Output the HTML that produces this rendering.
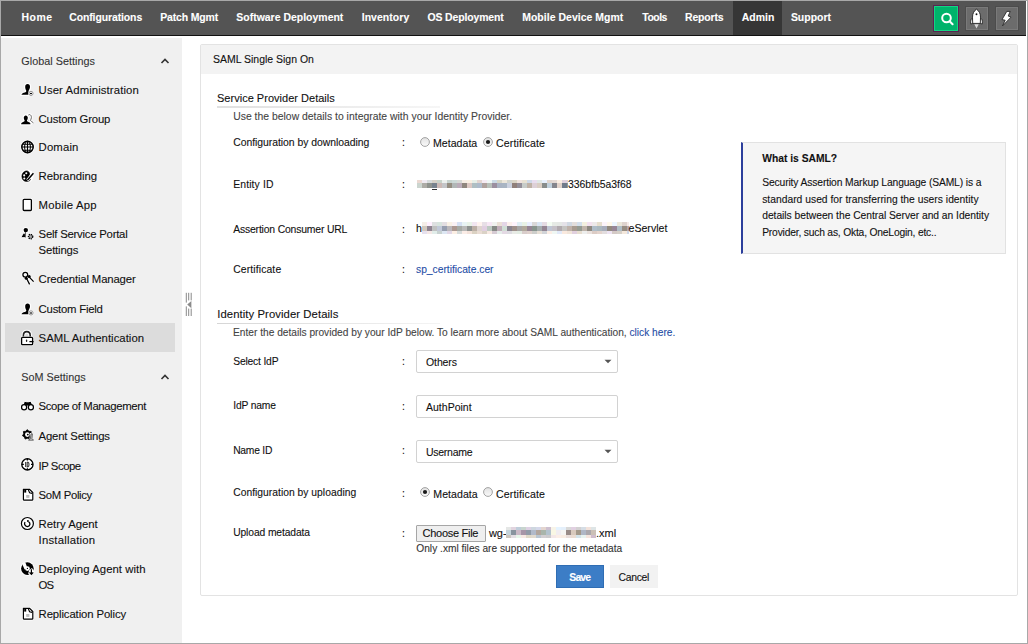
<!DOCTYPE html>
<html><head><meta charset="utf-8"><title>SAML</title>
<style>
html,body{margin:0;padding:0;width:1028px;height:644px;overflow:hidden;background:#fff;}
body{position:relative;font-family:"Liberation Sans",sans-serif;}
.t{position:absolute;-webkit-text-stroke:0.1px;}
.r{position:absolute;}
</style></head><body>
<div class="r" style="left:0px;top:0px;width:1028px;height:644px;background:#fff;"></div>
<div class="r" style="left:1px;top:1px;width:1025px;height:34px;background:#545454;"></div>
<div class="r" style="left:1px;top:35px;width:1025px;height:1px;background:#111;"></div>
<div class="r" style="left:733px;top:1px;width:49px;height:34px;background:#363636;"></div>
<div class="t" style="left:21.5px;top:10.08px;font-size:10.45px;line-height:15px;color:#fff;font-weight:bold;white-space:nowrap;letter-spacing:0.5px;">Home</div>
<div class="t" style="left:69.2px;top:10.08px;font-size:10.45px;line-height:15px;color:#fff;font-weight:bold;white-space:nowrap;letter-spacing:-0.092px;">Configurations</div>
<div class="t" style="left:160.2px;top:10.08px;font-size:10.45px;line-height:15px;color:#fff;font-weight:bold;white-space:nowrap;letter-spacing:-0.133px;">Patch Mgmt</div>
<div class="t" style="left:236.3px;top:10.08px;font-size:10.45px;line-height:15px;color:#fff;font-weight:bold;white-space:nowrap;letter-spacing:0.017px;">Software Deployment</div>
<div class="t" style="left:361.7px;top:10.08px;font-size:10.45px;line-height:15px;color:#fff;font-weight:bold;white-space:nowrap;letter-spacing:0.075px;">Inventory</div>
<div class="t" style="left:427.4px;top:10.08px;font-size:10.45px;line-height:15px;color:#fff;font-weight:bold;white-space:nowrap;letter-spacing:-0.108px;">OS Deployment</div>
<div class="t" style="left:522.2px;top:10.08px;font-size:10.45px;line-height:15px;color:#fff;font-weight:bold;white-space:nowrap;letter-spacing:0.047px;">Mobile Device Mgmt</div>
<div class="t" style="left:642.3px;top:10.08px;font-size:10.45px;line-height:15px;color:#fff;font-weight:bold;white-space:nowrap;letter-spacing:-0.5px;">Tools</div>
<div class="t" style="left:685px;top:10.08px;font-size:10.45px;line-height:15px;color:#fff;font-weight:bold;white-space:nowrap;letter-spacing:-0.15px;">Reports</div>
<div class="t" style="left:741.8px;top:10.08px;font-size:10.45px;line-height:15px;color:#fff;font-weight:bold;white-space:nowrap;letter-spacing:0.025px;">Admin</div>
<div class="t" style="left:790.9px;top:10.08px;font-size:10.45px;line-height:15px;color:#fff;font-weight:bold;white-space:nowrap;letter-spacing:0.017px;">Support</div>
<div class="r" style="left:933px;top:5px;width:26px;height:27px;background:#00b36b;border:1px solid #5b2352;box-shadow:inset 0 0 0 1px #14d383;box-sizing:border-box;"></div>
<svg class="r" style="left:933px;top:5px" width="26" height="27" viewBox="0 0 26 27"><circle cx="13.5" cy="13" r="4.3" fill="none" stroke="#fff" stroke-width="2"/><line x1="16.6" y1="16.2" x2="19.6" y2="19.2" stroke="#fff" stroke-width="2" stroke-linecap="round"/></svg>
<div class="r" style="left:965px;top:6px;width:24px;height:25px;background:#6c6c6c;border:1px solid #4c4c4c;box-shadow:inset 0 0 0 1px #7a7a7a;box-sizing:border-box;"></div>
<svg class="r" style="left:965px;top:6px" width="24" height="25" viewBox="965 6 24 25"><path d="M972.6 17.6 C971 18.6 970.5 20.8 970.7 23.9 L973.4 23.4Z M980.4 17.6 C982 18.6 982.5 20.8 982.3 23.9 L979.6 23.4Z" fill="#fff" stroke="#111" stroke-width="0.8"/><path d="M976.5 9.2 C979 10.8 980.5 13.6 980.5 17.2 L980.3 23.4 L972.7 23.4 L972.5 17.2 C972.5 13.6 974 10.8 976.5 9.2Z" fill="#fff" stroke="#111" stroke-width="0.8"/><path d="M974.3 24.2 H978.7 L976.5 28.4Z" fill="#d8d8d8"/><circle cx="976.5" cy="14.2" r="0.95" fill="#111"/></svg>
<div class="r" style="left:995px;top:6px;width:24px;height:25px;background:#6c6c6c;border:1px solid #4c4c4c;box-shadow:inset 0 0 0 1px #7a7a7a;box-sizing:border-box;"></div>
<svg class="r" style="left:995px;top:6px" width="24" height="25" viewBox="995 6 24 25"><path d="M1006.8 11.4 L1010.2 11.4 L1008.2 16 L1011 17.2 L1002.6 25.8 L1005.2 20.2 L1002 19.6Z" fill="#fff" stroke="#1a1a1a" stroke-width="0.8" stroke-linejoin="round"/></svg>
<div class="r" style="left:1px;top:38px;width:181px;height:605px;background:#f0f0f0;"></div>
<div class="r" style="left:5px;top:323px;width:170px;height:29px;background:#dcdcdc;"></div>
<div class="t" style="left:21.3px;top:54.05px;font-size:10.82px;line-height:15px;color:#333;font-weight:normal;white-space:nowrap;letter-spacing:0.029px;">Global Settings</div>
<div class="t" style="left:21.3px;top:369.55px;font-size:10.82px;line-height:15px;color:#333;font-weight:normal;white-space:nowrap;letter-spacing:0.009px;">SoM Settings</div>
<svg class="r" style="left:159.5px;top:57px" width="10" height="8" viewBox="0 0 10 8"><path d="M1.5 6 L5 2.5 L8.5 6" fill="none" stroke="#333" stroke-width="1.6"/></svg>
<svg class="r" style="left:159.5px;top:373px" width="10" height="8" viewBox="0 0 10 8"><path d="M1.5 6 L5 2.5 L8.5 6" fill="none" stroke="#333" stroke-width="1.6"/></svg>
<div class="t" style="left:38.6px;top:81.77px;font-size:11.35px;line-height:16px;color:#111;font-weight:normal;white-space:nowrap;letter-spacing:0.1px;">User Administration</div>
<div class="t" style="left:38.6px;top:110.87px;font-size:11.35px;line-height:16px;color:#111;font-weight:normal;white-space:nowrap;letter-spacing:-0.182px;">Custom Group</div>
<div class="t" style="left:38.6px;top:139.37px;font-size:11.35px;line-height:16px;color:#111;font-weight:normal;white-space:nowrap;letter-spacing:0.14px;">Domain</div>
<div class="t" style="left:38.6px;top:167.97px;font-size:11.35px;line-height:16px;color:#111;font-weight:normal;white-space:nowrap;letter-spacing:-0.022px;">Rebranding</div>
<div class="t" style="left:38.6px;top:197.07px;font-size:11.35px;line-height:16px;color:#111;font-weight:normal;white-space:nowrap;letter-spacing:0.2px;">Mobile App</div>
<div class="t" style="left:38.6px;top:225.87px;font-size:11.35px;line-height:16px;color:#111;font-weight:normal;white-space:nowrap;letter-spacing:-0.233px;">Self Service Portal</div>
<div class="t" style="left:38.6px;top:241.87px;font-size:11.35px;line-height:16px;color:#111;font-weight:normal;white-space:nowrap;letter-spacing:-0.171px;">Settings</div>
<div class="t" style="left:38.6px;top:271.07px;font-size:11.35px;line-height:16px;color:#111;font-weight:normal;white-space:nowrap;letter-spacing:-0.147px;">Credential Manager</div>
<div class="t" style="left:38.6px;top:301.07px;font-size:11.35px;line-height:16px;color:#111;font-weight:normal;white-space:nowrap;letter-spacing:-0.227px;">Custom Field</div>
<div class="t" style="left:38.6px;top:330.07px;font-size:11.35px;line-height:16px;color:#111;font-weight:normal;white-space:nowrap;letter-spacing:0.033px;">SAML Authentication</div>
<div class="t" style="left:38.6px;top:398.47px;font-size:11.35px;line-height:16px;color:#111;font-weight:normal;white-space:nowrap;letter-spacing:-0.356px;">Scope of Management</div>
<div class="t" style="left:38.6px;top:428.17px;font-size:11.35px;line-height:16px;color:#111;font-weight:normal;white-space:nowrap;letter-spacing:-0.185px;">Agent Settings</div>
<div class="t" style="left:38.6px;top:457.57px;font-size:11.35px;line-height:16px;color:#111;font-weight:normal;white-space:nowrap;letter-spacing:-0.471px;">IP Scope</div>
<div class="t" style="left:38.6px;top:486.97px;font-size:11.35px;line-height:16px;color:#111;font-weight:normal;white-space:nowrap;letter-spacing:-0.344px;">SoM Policy</div>
<div class="t" style="left:38.6px;top:516.17px;font-size:11.35px;line-height:16px;color:#111;font-weight:normal;white-space:nowrap;letter-spacing:-0.01px;">Retry Agent</div>
<div class="t" style="left:38.6px;top:532.17px;font-size:11.35px;line-height:16px;color:#111;font-weight:normal;white-space:nowrap;letter-spacing:0.2px;">Installation</div>
<div class="t" style="left:38.6px;top:560.87px;font-size:11.35px;line-height:16px;color:#111;font-weight:normal;white-space:nowrap;letter-spacing:0.058px;">Deploying Agent with</div>
<div class="t" style="left:38.6px;top:576.87px;font-size:11.35px;line-height:16px;color:#111;font-weight:normal;white-space:nowrap;letter-spacing:-0.85px;">OS</div>
<div class="t" style="left:38.6px;top:606.17px;font-size:11.35px;line-height:16px;color:#111;font-weight:normal;white-space:nowrap;letter-spacing:-0.118px;">Replication Policy</div>
<svg class="r" style="left:19px;top:82px;overflow:visible" width="18" height="18" viewBox="19 82 18 18"><g transform="translate(0 0)"><path d="M27.6 84.1 C29.1 84.1 30 85.2 30 86.8 C30 88.4 29.3 89.6 28.7 90.4 C28.4 91.4 28.4 92.6 28.7 94.8 L21.4 94.8 C21.9 93.6 23.2 93 24.8 92.6 C25.9 92.3 26.5 91.6 26.2 90.5 C25.6 89.6 25.2 88.4 25.2 86.8 C25.2 85.2 26.1 84.1 27.6 84.1Z" fill="#fff" stroke="#fff" stroke-width="2.4" stroke-linejoin="round" /><path d="M27.6 84.1 C29.1 84.1 30 85.2 30 86.8 C30 88.4 29.3 89.6 28.7 90.4 C28.4 91.4 28.4 92.6 28.7 94.8 L21.4 94.8 C21.9 93.6 23.2 93 24.8 92.6 C25.9 92.3 26.5 91.6 26.2 90.5 C25.6 89.6 25.2 88.4 25.2 86.8 C25.2 85.2 26.1 84.1 27.6 84.1Z" fill="#000"/><circle cx="31" cy="93.4" r="2.7" fill="#fff"/><circle cx="31" cy="93.4" r="2.1" fill="#fff" stroke="#8a8a8a" stroke-width="0.9"/><ellipse cx="31" cy="93.5" rx="1.1" ry="0.65" fill="#000"/></g></svg>
<svg class="r" style="left:19px;top:112px;overflow:visible" width="18" height="18" viewBox="19 112 18 18"><path d="M28.3 120.5 C27.6 119.6 27.4 118.6 27.4 117.6 C27.4 116 28.2 114.6 29.4 114.6 C30.8 114.6 31.4 116 31.4 117.4 C31.4 118.8 30.7 119.8 30.4 120.4 C31 121.4 32.4 121.8 33.4 122.8" fill="none" stroke="#fff" stroke-width="2.6"/><path d="M28.3 120.5 C27.6 119.6 27.4 118.6 27.4 117.6 C27.4 116 28.2 114.6 29.4 114.6 C30.8 114.6 31.4 116 31.4 117.4 C31.4 118.8 30.7 119.8 30.4 120.4 C31 121.4 32.4 121.8 33.4 122.8" fill="none" stroke="#555" stroke-width="0.9"/><path d="M25.8 115.4 C27 115.4 27.8 116.4 27.8 117.8 C27.8 119 27.3 119.9 26.9 120.6 C26.9 121.4 27.6 121.8 29 122.2 C30 122.6 30.4 123.3 30.5 124.2 L21.1 124.2 C21.2 123.3 21.7 122.6 22.7 122.2 C24 121.8 24.7 121.4 24.7 120.6 C24.3 119.9 23.8 119 23.8 117.8 C23.8 116.4 24.6 115.4 25.8 115.4Z" fill="#fff" stroke="#fff" stroke-width="2.4" stroke-linejoin="round" /><path d="M25.8 115.4 C27 115.4 27.8 116.4 27.8 117.8 C27.8 119 27.3 119.9 26.9 120.6 C26.9 121.4 27.6 121.8 29 122.2 C30 122.6 30.4 123.3 30.5 124.2 L21.1 124.2 C21.2 123.3 21.7 122.6 22.7 122.2 C24 121.8 24.7 121.4 24.7 120.6 C24.3 119.9 23.8 119 23.8 117.8 C23.8 116.4 24.6 115.4 25.8 115.4Z" fill="#000"/></svg>
<svg class="r" style="left:19px;top:138px;overflow:visible" width="18" height="18" viewBox="19 138 18 18"><circle cx="27.5" cy="147" r="7.2" fill="#fff"/><circle cx="27.5" cy="147" r="5.7" fill="#fff" stroke="#000" stroke-width="1.5"/><path d="M27.5 141.3 V152.7 M21.8 147 H33.2 M22.6 144.2 H32.4 M22.6 150.2 H32.4" stroke="#000" stroke-width="1.1"/><ellipse cx="27.5" cy="147" rx="2.9" ry="5.7" fill="none" stroke="#000" stroke-width="1"/></svg>
<svg class="r" style="left:19px;top:167px;overflow:visible" width="18" height="18" viewBox="19 167 18 18"><circle cx="27" cy="176" r="6.6" fill="#fff"/><path d="M26.6 170.9 C24 170.9 21.9 173.3 21.9 176.4 C21.9 179.6 24 181.4 26.6 181.4 C28.6 181.4 30.4 180.6 30.4 179.4 C30.4 178.4 28.8 178.2 28.6 177.2 C28.4 176 29.6 175.4 29.6 174 C29.6 172.2 28.2 170.9 26.6 170.9Z" fill="#000" stroke="#000" stroke-width="0.6"/><circle cx="26.3" cy="173.2" r="1.05" fill="#fff"/><circle cx="24.2" cy="175.4" r="1.05" fill="#fff"/><circle cx="24.3" cy="178.5" r="1.05" fill="#fff"/><circle cx="28" cy="180" r="0.9" fill="#fff"/><path d="M27.4 180.2 L33.4 173.2" stroke="#fff" stroke-width="3"/><path d="M27.4 180.2 L33.4 173.2" stroke="#000" stroke-width="1.5"/></svg>
<svg class="r" style="left:19px;top:196px;overflow:visible" width="18" height="18" viewBox="19 196 18 18"><rect x="23.2" y="199.3" width="8.2" height="11.2" rx="0.9" fill="#fff" stroke="#fff" stroke-width="2.6"/><rect x="23.2" y="199.3" width="8.2" height="11.2" rx="0.9" fill="#fff" stroke="#000" stroke-width="1.3"/></svg>
<svg class="r" style="left:19px;top:226px;overflow:visible" width="18" height="18" viewBox="19 226 18 18"><circle cx="25.8" cy="230.1" r="3" fill="#fff"/><circle cx="25.8" cy="230.1" r="2.2" fill="#000"/><path d="M20.9 237.6 L23.4 233.2 L25.3 233.4 L25.6 237.6Z" fill="#000" stroke="#fff" stroke-width="0.8"/><path d="M25.4 232 V237.4" stroke="#444" stroke-width="0.9"/><circle cx="30.6" cy="236.6" r="3.3" fill="#fff"/><circle cx="30.6" cy="236.6" r="2.2" fill="#888" stroke="#000" stroke-width="1.3" stroke-dasharray="1.2 0.7"/><circle cx="30.6" cy="236.6" r="0.9" fill="#aaa"/></svg>
<svg class="r" style="left:19px;top:270px;overflow:visible" width="18" height="18" viewBox="19 270 18 18"><g fill="none" stroke="#fff" stroke-width="3"><circle cx="25.3" cy="274.8" r="2.4"/><path d="M26.2 277.8 L29.6 284.4 M28.6 276.4 L33.6 281.6"/></g><g fill="none" stroke="#000" stroke-width="1.3"><circle cx="25.3" cy="274.8" r="2.4"/><path d="M26.2 277.8 L29.6 284.4 M28.6 276.4 L33.6 281.6"/></g><circle cx="26.2" cy="278.2" r="1.5" fill="#000"/><circle cx="29.2" cy="276.4" r="1.5" fill="#000"/></svg>
<svg class="r" style="left:19px;top:300px;overflow:visible" width="18" height="18" viewBox="19 300 18 18"><g transform="translate(0 219.5)"><path d="M27.6 84.1 C29.1 84.1 30 85.2 30 86.8 C30 88.4 29.3 89.6 28.7 90.4 C28.4 91.4 28.4 92.6 28.7 94.8 L21.4 94.8 C21.9 93.6 23.2 93 24.8 92.6 C25.9 92.3 26.5 91.6 26.2 90.5 C25.6 89.6 25.2 88.4 25.2 86.8 C25.2 85.2 26.1 84.1 27.6 84.1Z" fill="#fff" stroke="#fff" stroke-width="2.4" stroke-linejoin="round" /><path d="M27.6 84.1 C29.1 84.1 30 85.2 30 86.8 C30 88.4 29.3 89.6 28.7 90.4 C28.4 91.4 28.4 92.6 28.7 94.8 L21.4 94.8 C21.9 93.6 23.2 93 24.8 92.6 C25.9 92.3 26.5 91.6 26.2 90.5 C25.6 89.6 25.2 88.4 25.2 86.8 C25.2 85.2 26.1 84.1 27.6 84.1Z" fill="#000"/><circle cx="31" cy="93.4" r="2.7" fill="#fff"/><circle cx="31" cy="93.4" r="2.1" fill="#fff" stroke="#8a8a8a" stroke-width="0.9"/><ellipse cx="31" cy="93.5" rx="1.1" ry="0.65" fill="#000"/></g></svg>
<svg class="r" style="left:19px;top:329px;overflow:visible" width="18" height="18" viewBox="19 329 18 18"><path d="M23.4 337.4 V335.4 C23.4 333 24.8 331.6 26.8 331.6 C28.8 331.6 30.2 333 30.2 335.4 V337.4" fill="none" stroke="#fff" stroke-width="3.6"/><path d="M23.4 337.4 V335.4 C23.4 333 24.8 331.6 26.8 331.6 C28.8 331.6 30.2 333 30.2 335.4 V337.4" fill="none" stroke="#222" stroke-width="1.6"/><rect x="21.6" y="337.4" width="11" height="7.2" rx="0.9" fill="#fff" stroke="#fff" stroke-width="2"/><rect x="21.6" y="337.4" width="11" height="7.2" rx="0.9" fill="#fff" stroke="#000" stroke-width="1.3"/><ellipse cx="26.6" cy="340.8" rx="0.7" ry="1.3" fill="#222"/><path d="M29.4 341.6 H33.6" stroke="#000" stroke-width="1.3"/></svg>
<svg class="r" style="left:19px;top:398px;overflow:visible" width="18" height="18" viewBox="19 398 18 18"><path d="M24.6 401.4 H26.4 L27.2 403.6 H28.2 L29 401.4 H30.8 L33.4 406 H22Z" fill="#000" stroke="#fff" stroke-width="1"/><circle cx="24.1" cy="407.2" r="3.6" fill="#fff"/><circle cx="30.9" cy="407.2" r="3.6" fill="#fff"/><path d="M25 402.2 H30.4 L32.4 405.4 H23Z" fill="#000"/><circle cx="24.1" cy="407.2" r="2.55" fill="#fff" stroke="#000" stroke-width="1.25"/><circle cx="30.9" cy="407.2" r="2.55" fill="#fff" stroke="#000" stroke-width="1.25"/></svg>
<svg class="r" style="left:19px;top:426px;overflow:visible" width="18" height="18" viewBox="19 426 18 18"><path d="M27.30 429.60 L28.91 431.27 L31.21 431.48 L30.91 433.78 L32.17 435.71 L30.19 436.91 L29.47 439.10 L27.30 438.30 L25.13 439.10 L24.41 436.91 L22.43 435.71 L23.69 433.78 L23.39 431.48 L25.69 431.27Z" fill="#000" stroke="#fff" stroke-width="1.2" stroke-linejoin="round"/><path d="M27.30 429.60 L28.91 431.27 L31.21 431.48 L30.91 433.78 L32.17 435.71 L30.19 436.91 L29.47 439.10 L27.30 438.30 L25.13 439.10 L24.41 436.91 L22.43 435.71 L23.69 433.78 L23.39 431.48 L25.69 431.27Z" fill="#000" stroke="#000" stroke-width="0.8" stroke-linejoin="round"/><circle cx="27.3" cy="434.6" r="2.3" fill="#fff"/><circle cx="27.8" cy="434.6" r="0.9" fill="#000"/><path d="M30.5 433.6 L32.6 433.6 L32.2 438.6 L33.8 440.4 L28.8 440.4 L30.2 438.6Z" fill="#fff" stroke="#fff" stroke-width="1.2"/><path d="M31 433.8 L32.4 433.8 L32 438.6 L33.6 440.2 L28.6 440.2 L30.4 438.6Z" fill="#ccc" stroke="#333" stroke-width="0.7"/></svg>
<svg class="r" style="left:19px;top:455px;overflow:visible" width="18" height="18" viewBox="19 455 18 18"><circle cx="27.4" cy="464.4" r="7" fill="#fff"/><circle cx="27.4" cy="464.4" r="5.6" fill="#fff" stroke="#000" stroke-width="1.4"/><path d="M27.4 458.8 V460.6 M27.4 468.2 V470 M21.8 464.4 H23.8 M31 464.4 H33" stroke="#000" stroke-width="1.3"/><path d="M25.6 462 V467 M27.2 462 V467 C29.6 467 29.6 462 27.2 462" fill="none" stroke="#444" stroke-width="1.1"/></svg>
<svg class="r" style="left:19px;top:486px;overflow:visible" width="18" height="18" viewBox="19 486 18 18"><g transform="translate(0 0)"><path d="M23.4 489.4 H29.6 L32.8 492.6 V499.4 C32.8 499.9 32.5 500.2 32 500.2 H24.2 C23.7 500.2 23.4 499.9 23.4 499.4Z" fill="#fff" stroke="#fff" stroke-width="2.6"/><path d="M23.4 489.4 H29.6 L32.8 492.6 V499.4 C32.8 499.9 32.5 500.2 32 500.2 H24.2 C23.7 500.2 23.4 499.9 23.4 499.4Z" fill="#fff" stroke="#000" stroke-width="1.2"/><path d="M24.2 489.6 H26.2 L26.2 492.6 L24.2 492.6Z" fill="#000"/><path d="M28.4 490 L29.6 492.8 L32.2 493.4" fill="none" stroke="#000" stroke-width="1.1"/><rect x="26.3" y="495" width="3" height="2.8" fill="#999"/><path d="M26.3 495.8 H29.3 M26.3 497 H29.3" stroke="#fff" stroke-width="0.5"/></g></svg>
<svg class="r" style="left:19px;top:515px;overflow:visible" width="18" height="18" viewBox="19 515 18 18"><circle cx="27.4" cy="523.5" r="7.1" fill="#fff"/><circle cx="27.4" cy="523.5" r="6" fill="#fff" stroke="#000" stroke-width="1.2"/><path d="M25 522 C24 523.6 24.6 526.4 27.4 526.6 C30.2 526.6 30.8 523.2 28.6 521.8" fill="none" stroke="#000" stroke-width="1.3"/><circle cx="27.9" cy="521" r="0.95" fill="#000"/></svg>
<svg class="r" style="left:19px;top:560px;overflow:visible" width="18" height="18" viewBox="19 560 18 18"><circle cx="27.4" cy="568.6" r="7.3" fill="#fff"/><circle cx="27.4" cy="568.6" r="6.3" fill="#000"/><path d="M22 563.4 L25.4 562.6 L27.2 567.4 L24.6 569.4Z" fill="#fff"/><circle cx="27.4" cy="568.6" r="2.4" fill="#fff"/><circle cx="27.4" cy="568.4" r="0.6" fill="#000"/><path d="M29.2 570 L32 568 L34.6 572 L30.6 576.2 L28.2 573.4Z" fill="#fff"/><path d="M31.4 569.2 V574 M29.6 572.4 L31.4 574.4 L33.2 572.4" fill="none" stroke="#000" stroke-width="1.2"/></svg>
<svg class="r" style="left:19px;top:605px;overflow:visible" width="18" height="18" viewBox="19 605 18 18"><g transform="translate(0 119)"><path d="M23.4 489.4 H29.6 L32.8 492.6 V499.4 C32.8 499.9 32.5 500.2 32 500.2 H24.2 C23.7 500.2 23.4 499.9 23.4 499.4Z" fill="#fff" stroke="#fff" stroke-width="2.6"/><path d="M23.4 489.4 H29.6 L32.8 492.6 V499.4 C32.8 499.9 32.5 500.2 32 500.2 H24.2 C23.7 500.2 23.4 499.9 23.4 499.4Z" fill="#fff" stroke="#000" stroke-width="1.2"/><path d="M24.2 489.6 H26.2 L26.2 492.6 L24.2 492.6Z" fill="#000"/><path d="M28.4 490 L29.6 492.8 L32.2 493.4" fill="none" stroke="#000" stroke-width="1.1"/><rect x="26.3" y="495" width="3" height="2.8" fill="#999"/><path d="M26.3 495.8 H29.3 M26.3 497 H29.3" stroke="#fff" stroke-width="0.5"/></g></svg>
<svg class="r" style="left:180px;top:288px" width="20" height="32" viewBox="180 288 20 32"><path d="M186.3 292.8 V302.6 M186.3 306.4 V316 M188.7 292.8 V300.4 M188.7 308.6 V316 M191.2 292.8 V300.4 M191.2 308.6 V316" stroke="#7a7a7a" stroke-width="0.9"/><path d="M191.4 301 L187.2 304.6 L191.4 308.2Z" fill="#8a8a8a"/></svg>
<div class="r" style="left:200px;top:44px;width:818px;height:552px;border:1px solid #e3e3e3;border-radius:2px;box-sizing:border-box;background:#fff;"></div>
<div class="r" style="left:201px;top:45px;width:816px;height:29px;background:#f3f3f3;"></div>
<div class="t" style="left:213px;top:51.57px;font-size:10.48px;line-height:15px;color:#111;font-weight:normal;white-space:nowrap;">SAML Single Sign On</div>
<div class="t" style="left:217px;top:90.79px;font-size:11.0px;line-height:15px;color:#111;font-weight:normal;white-space:nowrap;letter-spacing:0.017px;">Service Provider Details</div>
<div class="r" style="left:217px;top:106px;width:223px;height:2px;background:linear-gradient(to right,#e0e0e0,#f6f6f6);"></div>
<div class="t" style="left:233.2px;top:108.50px;font-size:10.38px;line-height:15px;color:#444;font-weight:normal;white-space:nowrap;letter-spacing:0.016px;">Use the below details to integrate with your Identity Provider.</div>
<div class="t" style="left:233.2px;top:134.60px;font-size:10.4px;line-height:15px;color:#111;font-weight:normal;white-space:nowrap;letter-spacing:-0.03px;">Configuration by downloading</div>
<div class="t" style="left:402px;top:134.60px;font-size:10.4px;line-height:15px;color:#111;font-weight:normal;white-space:nowrap;">:</div>
<div class="t" style="left:233.2px;top:177.40px;font-size:10.4px;line-height:15px;color:#111;font-weight:normal;white-space:nowrap;letter-spacing:0.125px;">Entity ID</div>
<div class="t" style="left:402px;top:177.40px;font-size:10.4px;line-height:15px;color:#111;font-weight:normal;white-space:nowrap;">:</div>
<div class="t" style="left:233.2px;top:222.10px;font-size:10.4px;line-height:15px;color:#111;font-weight:normal;white-space:nowrap;letter-spacing:-0.171px;">Assertion Consumer URL</div>
<div class="t" style="left:402px;top:222.10px;font-size:10.4px;line-height:15px;color:#111;font-weight:normal;white-space:nowrap;">:</div>
<div class="t" style="left:233.2px;top:262.00px;font-size:10.4px;line-height:15px;color:#111;font-weight:normal;white-space:nowrap;letter-spacing:0.12px;">Certificate</div>
<div class="t" style="left:402px;top:262.00px;font-size:10.4px;line-height:15px;color:#111;font-weight:normal;white-space:nowrap;">:</div>
<svg class="r" style="left:419.8px;top:136.5px" width="10" height="10" viewBox="0 0 10 10"><defs><linearGradient id="rg1" x1="0" y1="0" x2="0" y2="1"><stop offset="0" stop-color="#e2e2e2"/><stop offset="1" stop-color="#fafafa"/></linearGradient></defs><circle cx="5" cy="5" r="4.4" fill="url(#rg1)" stroke="#9a9a9a" stroke-width="0.9"/></svg>
<div class="t" style="left:432.9px;top:135.83px;font-size:10.6px;line-height:15px;color:#111;font-weight:normal;white-space:nowrap;letter-spacing:0.029px;">Metadata</div>
<svg class="r" style="left:483px;top:136.5px" width="10" height="10" viewBox="0 0 10 10"><defs><linearGradient id="rg2" x1="0" y1="0" x2="0" y2="1"><stop offset="0" stop-color="#e2e2e2"/><stop offset="1" stop-color="#fafafa"/></linearGradient></defs><circle cx="5" cy="5" r="4.4" fill="url(#rg2)" stroke="#9a9a9a" stroke-width="0.9"/><circle cx="5" cy="5" r="2.1" fill="#1a1a1a"/></svg>
<div class="t" style="left:496px;top:135.83px;font-size:10.6px;line-height:15px;color:#111;font-weight:normal;white-space:nowrap;letter-spacing:0.12px;">Certificate</div>
<div class="r" style="left:417px;top:179.5px;width:5px;height:3.5px;background:rgb(235,217,210);"></div>
<div class="r" style="left:422px;top:179.5px;width:5px;height:3.5px;background:rgb(240,235,243);"></div>
<div class="r" style="left:427px;top:179.5px;width:5px;height:3.5px;background:rgb(215,220,220);"></div>
<div class="r" style="left:432px;top:179.5px;width:5px;height:3.5px;background:rgb(214,209,199);"></div>
<div class="r" style="left:437px;top:179.5px;width:5px;height:3.5px;background:rgb(199,211,202);"></div>
<div class="r" style="left:442px;top:179.5px;width:5px;height:3.5px;background:rgb(237,241,238);"></div>
<div class="r" style="left:447px;top:179.5px;width:5px;height:3.5px;background:rgb(199,211,207);"></div>
<div class="r" style="left:452px;top:179.5px;width:5px;height:3.5px;background:rgb(205,218,216);"></div>
<div class="r" style="left:457px;top:179.5px;width:5px;height:3.5px;background:rgb(215,217,213);"></div>
<div class="r" style="left:462px;top:179.5px;width:5px;height:3.5px;background:rgb(247,238,229);"></div>
<div class="r" style="left:467px;top:179.5px;width:5px;height:3.5px;background:rgb(250,240,227);"></div>
<div class="r" style="left:472px;top:179.5px;width:5px;height:3.5px;background:rgb(231,239,232);"></div>
<div class="r" style="left:477px;top:179.5px;width:5px;height:3.5px;background:rgb(227,213,208);"></div>
<div class="r" style="left:482px;top:179.5px;width:5px;height:3.5px;background:rgb(245,235,244);"></div>
<div class="r" style="left:487px;top:179.5px;width:5px;height:3.5px;background:rgb(240,247,245);"></div>
<div class="r" style="left:492px;top:179.5px;width:5px;height:3.5px;background:rgb(203,218,229);"></div>
<div class="r" style="left:497px;top:179.5px;width:5px;height:3.5px;background:rgb(214,213,198);"></div>
<div class="r" style="left:502px;top:179.5px;width:5px;height:3.5px;background:rgb(237,231,219);"></div>
<div class="r" style="left:507px;top:179.5px;width:5px;height:3.5px;background:rgb(209,212,206);"></div>
<div class="r" style="left:512px;top:179.5px;width:5px;height:3.5px;background:rgb(218,213,198);"></div>
<div class="r" style="left:517px;top:179.5px;width:5px;height:3.5px;background:rgb(240,227,222);"></div>
<div class="r" style="left:522px;top:179.5px;width:5px;height:3.5px;background:rgb(232,226,211);"></div>
<div class="r" style="left:527px;top:179.5px;width:5px;height:3.5px;background:rgb(206,217,232);"></div>
<div class="r" style="left:532px;top:179.5px;width:5px;height:3.5px;background:rgb(233,222,239);"></div>
<div class="r" style="left:537px;top:179.5px;width:5px;height:3.5px;background:rgb(224,232,230);"></div>
<div class="r" style="left:542px;top:179.5px;width:5px;height:3.5px;background:rgb(232,241,254);"></div>
<div class="r" style="left:547px;top:179.5px;width:5px;height:3.5px;background:rgb(224,213,205);"></div>
<div class="r" style="left:552px;top:179.5px;width:5px;height:3.5px;background:rgb(228,217,212);"></div>
<div class="r" style="left:557px;top:179.5px;width:5px;height:3.5px;background:rgb(250,238,226);"></div>
<div class="r" style="left:562px;top:179.5px;width:5px;height:3.5px;background:rgb(224,209,221);"></div>
<div class="r" style="left:567px;top:179.5px;width:1px;height:3.5px;background:rgb(227,211,206);"></div>
<div class="r" style="left:417px;top:183px;width:5px;height:5px;background:rgb(203,213,207);"></div>
<div class="r" style="left:422px;top:183px;width:5px;height:5px;background:rgb(173,172,166);"></div>
<div class="r" style="left:427px;top:183px;width:5px;height:5px;background:rgb(143,147,142);"></div>
<div class="r" style="left:432px;top:183px;width:5px;height:5px;background:rgb(120,131,142);"></div>
<div class="r" style="left:437px;top:183px;width:5px;height:5px;background:rgb(204,185,181);"></div>
<div class="r" style="left:442px;top:183px;width:5px;height:5px;background:rgb(195,197,200);"></div>
<div class="r" style="left:447px;top:183px;width:5px;height:5px;background:rgb(149,142,130);"></div>
<div class="r" style="left:452px;top:183px;width:5px;height:5px;background:rgb(177,183,183);"></div>
<div class="r" style="left:457px;top:183px;width:5px;height:5px;background:rgb(187,172,185);"></div>
<div class="r" style="left:462px;top:183px;width:5px;height:5px;background:rgb(144,135,126);"></div>
<div class="r" style="left:467px;top:183px;width:5px;height:5px;background:rgb(220,200,195);"></div>
<div class="r" style="left:472px;top:183px;width:5px;height:5px;background:rgb(175,191,195);"></div>
<div class="r" style="left:477px;top:183px;width:5px;height:5px;background:rgb(174,187,203);"></div>
<div class="r" style="left:482px;top:183px;width:5px;height:5px;background:rgb(175,161,158);"></div>
<div class="r" style="left:487px;top:183px;width:5px;height:5px;background:rgb(184,192,186);"></div>
<div class="r" style="left:492px;top:183px;width:5px;height:5px;background:rgb(155,143,160);"></div>
<div class="r" style="left:497px;top:183px;width:5px;height:5px;background:rgb(169,179,195);"></div>
<div class="r" style="left:502px;top:183px;width:5px;height:5px;background:rgb(169,181,195);"></div>
<div class="r" style="left:507px;top:183px;width:5px;height:5px;background:rgb(203,209,223);"></div>
<div class="r" style="left:512px;top:183px;width:5px;height:5px;background:rgb(144,128,122);"></div>
<div class="r" style="left:517px;top:183px;width:5px;height:5px;background:rgb(148,143,153);"></div>
<div class="r" style="left:522px;top:183px;width:5px;height:5px;background:rgb(199,204,201);"></div>
<div class="r" style="left:527px;top:183px;width:5px;height:5px;background:rgb(191,178,166);"></div>
<div class="r" style="left:532px;top:183px;width:5px;height:5px;background:rgb(221,208,215);"></div>
<div class="r" style="left:537px;top:183px;width:5px;height:5px;background:rgb(218,206,196);"></div>
<div class="r" style="left:542px;top:183px;width:5px;height:5px;background:rgb(136,141,140);"></div>
<div class="r" style="left:547px;top:183px;width:5px;height:5px;background:rgb(192,208,220);"></div>
<div class="r" style="left:552px;top:183px;width:5px;height:5px;background:rgb(132,133,140);"></div>
<div class="r" style="left:557px;top:183px;width:5px;height:5px;background:rgb(225,210,202);"></div>
<div class="r" style="left:562px;top:183px;width:5px;height:5px;background:rgb(112,123,139);"></div>
<div class="r" style="left:567px;top:183px;width:1px;height:5px;background:rgb(145,154,152);"></div>
<div class="r" style="left:432px;top:188.5px;width:5px;height:1px;background:#333;"></div>
<div class="t" style="left:568px;top:176.70px;font-size:10.4px;line-height:15px;color:#111;font-weight:normal;white-space:nowrap;">336bfb5a3f68</div>
<div class="t" style="left:416px;top:220.83px;font-size:10.6px;line-height:15px;color:#111;font-weight:normal;white-space:nowrap;">h</div>
<div class="r" style="left:422px;top:222px;width:5px;height:4px;background:rgb(245,238,232);"></div>
<div class="r" style="left:427px;top:222px;width:5px;height:4px;background:rgb(255,240,255);"></div>
<div class="r" style="left:432px;top:222px;width:5px;height:4px;background:rgb(222,224,225);"></div>
<div class="r" style="left:437px;top:222px;width:5px;height:4px;background:rgb(216,228,222);"></div>
<div class="r" style="left:442px;top:222px;width:5px;height:4px;background:rgb(227,222,226);"></div>
<div class="r" style="left:447px;top:222px;width:5px;height:4px;background:rgb(249,241,229);"></div>
<div class="r" style="left:452px;top:222px;width:5px;height:4px;background:rgb(249,241,244);"></div>
<div class="r" style="left:457px;top:222px;width:5px;height:4px;background:rgb(213,224,243);"></div>
<div class="r" style="left:462px;top:222px;width:5px;height:4px;background:rgb(233,244,244);"></div>
<div class="r" style="left:467px;top:222px;width:5px;height:4px;background:rgb(233,243,232);"></div>
<div class="r" style="left:472px;top:222px;width:5px;height:4px;background:rgb(242,230,241);"></div>
<div class="r" style="left:477px;top:222px;width:5px;height:4px;background:rgb(255,243,239);"></div>
<div class="r" style="left:482px;top:222px;width:5px;height:4px;background:rgb(231,223,230);"></div>
<div class="r" style="left:487px;top:222px;width:5px;height:4px;background:rgb(247,231,245);"></div>
<div class="r" style="left:492px;top:222px;width:5px;height:4px;background:rgb(241,242,239);"></div>
<div class="r" style="left:497px;top:222px;width:5px;height:4px;background:rgb(235,224,214);"></div>
<div class="r" style="left:502px;top:222px;width:5px;height:4px;background:rgb(228,214,231);"></div>
<div class="r" style="left:507px;top:222px;width:5px;height:4px;background:rgb(253,240,236);"></div>
<div class="r" style="left:512px;top:222px;width:5px;height:4px;background:rgb(254,243,252);"></div>
<div class="r" style="left:517px;top:222px;width:5px;height:4px;background:rgb(224,238,245);"></div>
<div class="r" style="left:522px;top:222px;width:5px;height:4px;background:rgb(233,243,230);"></div>
<div class="r" style="left:527px;top:222px;width:5px;height:4px;background:rgb(233,239,255);"></div>
<div class="r" style="left:532px;top:222px;width:5px;height:4px;background:rgb(218,216,216);"></div>
<div class="r" style="left:537px;top:222px;width:5px;height:4px;background:rgb(217,229,243);"></div>
<div class="r" style="left:542px;top:222px;width:5px;height:4px;background:rgb(229,219,227);"></div>
<div class="r" style="left:547px;top:222px;width:5px;height:4px;background:rgb(244,252,242);"></div>
<div class="r" style="left:552px;top:222px;width:5px;height:4px;background:rgb(230,234,229);"></div>
<div class="r" style="left:557px;top:222px;width:5px;height:4px;background:rgb(229,232,229);"></div>
<div class="r" style="left:562px;top:222px;width:5px;height:4px;background:rgb(229,226,232);"></div>
<div class="r" style="left:567px;top:222px;width:5px;height:4px;background:rgb(209,217,227);"></div>
<div class="r" style="left:572px;top:222px;width:5px;height:4px;background:rgb(227,222,220);"></div>
<div class="r" style="left:577px;top:222px;width:5px;height:4px;background:rgb(211,223,236);"></div>
<div class="r" style="left:582px;top:222px;width:5px;height:4px;background:rgb(244,240,223);"></div>
<div class="r" style="left:587px;top:222px;width:5px;height:4px;background:rgb(243,225,239);"></div>
<div class="r" style="left:592px;top:222px;width:5px;height:4px;background:rgb(237,233,233);"></div>
<div class="r" style="left:597px;top:222px;width:5px;height:4px;background:rgb(230,222,205);"></div>
<div class="r" style="left:602px;top:222px;width:5px;height:4px;background:rgb(252,244,250);"></div>
<div class="r" style="left:607px;top:222px;width:5px;height:4px;background:rgb(255,248,234);"></div>
<div class="r" style="left:612px;top:222px;width:5px;height:4px;background:rgb(236,246,255);"></div>
<div class="r" style="left:617px;top:222px;width:5px;height:4px;background:rgb(235,231,218);"></div>
<div class="r" style="left:622px;top:222px;width:5px;height:4px;background:rgb(222,211,206);"></div>
<div class="r" style="left:627px;top:222px;width:2px;height:4px;background:rgb(246,235,232);"></div>
<div class="r" style="left:422px;top:226px;width:5px;height:5px;background:rgb(209,200,189);"></div>
<div class="r" style="left:427px;top:226px;width:5px;height:5px;background:rgb(144,132,146);"></div>
<div class="r" style="left:432px;top:226px;width:5px;height:5px;background:rgb(192,193,193);"></div>
<div class="r" style="left:437px;top:226px;width:5px;height:5px;background:rgb(194,201,217);"></div>
<div class="r" style="left:442px;top:226px;width:5px;height:5px;background:rgb(150,158,175);"></div>
<div class="r" style="left:447px;top:226px;width:5px;height:5px;background:rgb(186,183,187);"></div>
<div class="r" style="left:452px;top:226px;width:5px;height:5px;background:rgb(172,152,145);"></div>
<div class="r" style="left:457px;top:226px;width:5px;height:5px;background:rgb(166,170,164);"></div>
<div class="r" style="left:462px;top:226px;width:5px;height:5px;background:rgb(185,185,184);"></div>
<div class="r" style="left:467px;top:226px;width:5px;height:5px;background:rgb(143,147,145);"></div>
<div class="r" style="left:472px;top:226px;width:5px;height:5px;background:rgb(189,176,166);"></div>
<div class="r" style="left:477px;top:226px;width:5px;height:5px;background:rgb(222,212,208);"></div>
<div class="r" style="left:482px;top:226px;width:5px;height:5px;background:rgb(225,207,225);"></div>
<div class="r" style="left:487px;top:226px;width:5px;height:5px;background:rgb(189,202,194);"></div>
<div class="r" style="left:492px;top:226px;width:5px;height:5px;background:rgb(136,139,135);"></div>
<div class="r" style="left:497px;top:226px;width:5px;height:5px;background:rgb(193,173,185);"></div>
<div class="r" style="left:502px;top:226px;width:5px;height:5px;background:rgb(208,222,213);"></div>
<div class="r" style="left:507px;top:226px;width:5px;height:5px;background:rgb(138,133,145);"></div>
<div class="r" style="left:512px;top:226px;width:5px;height:5px;background:rgb(160,145,139);"></div>
<div class="r" style="left:517px;top:226px;width:5px;height:5px;background:rgb(167,166,166);"></div>
<div class="r" style="left:522px;top:226px;width:5px;height:5px;background:rgb(177,169,156);"></div>
<div class="r" style="left:527px;top:226px;width:5px;height:5px;background:rgb(150,134,149);"></div>
<div class="r" style="left:532px;top:226px;width:5px;height:5px;background:rgb(136,149,142);"></div>
<div class="r" style="left:537px;top:226px;width:5px;height:5px;background:rgb(165,173,174);"></div>
<div class="r" style="left:542px;top:226px;width:5px;height:5px;background:rgb(148,133,147);"></div>
<div class="r" style="left:547px;top:226px;width:5px;height:5px;background:rgb(191,197,212);"></div>
<div class="r" style="left:552px;top:226px;width:5px;height:5px;background:rgb(197,192,199);"></div>
<div class="r" style="left:557px;top:226px;width:5px;height:5px;background:rgb(177,170,174);"></div>
<div class="r" style="left:562px;top:226px;width:5px;height:5px;background:rgb(197,196,193);"></div>
<div class="r" style="left:567px;top:226px;width:5px;height:5px;background:rgb(191,177,169);"></div>
<div class="r" style="left:572px;top:226px;width:5px;height:5px;background:rgb(167,155,144);"></div>
<div class="r" style="left:577px;top:226px;width:5px;height:5px;background:rgb(149,155,146);"></div>
<div class="r" style="left:582px;top:226px;width:5px;height:5px;background:rgb(192,180,171);"></div>
<div class="r" style="left:587px;top:226px;width:5px;height:5px;background:rgb(142,137,129);"></div>
<div class="r" style="left:592px;top:226px;width:5px;height:5px;background:rgb(174,188,199);"></div>
<div class="r" style="left:597px;top:226px;width:5px;height:5px;background:rgb(170,184,191);"></div>
<div class="r" style="left:602px;top:226px;width:5px;height:5px;background:rgb(168,173,187);"></div>
<div class="r" style="left:607px;top:226px;width:5px;height:5px;background:rgb(146,138,127);"></div>
<div class="r" style="left:612px;top:226px;width:5px;height:5px;background:rgb(151,134,150);"></div>
<div class="r" style="left:617px;top:226px;width:5px;height:5px;background:rgb(175,189,198);"></div>
<div class="r" style="left:622px;top:226px;width:5px;height:5px;background:rgb(151,141,130);"></div>
<div class="r" style="left:627px;top:226px;width:2px;height:5px;background:rgb(179,164,174);"></div>
<div class="r" style="left:422px;top:231px;width:5px;height:3px;background:rgb(230,224,238);"></div>
<div class="r" style="left:427px;top:231px;width:5px;height:3px;background:rgb(245,232,230);"></div>
<div class="r" style="left:432px;top:231px;width:5px;height:3px;background:rgb(225,237,234);"></div>
<div class="r" style="left:437px;top:231px;width:5px;height:3px;background:rgb(200,210,209);"></div>
<div class="r" style="left:442px;top:231px;width:5px;height:3px;background:rgb(221,231,243);"></div>
<div class="r" style="left:447px;top:231px;width:5px;height:3px;background:rgb(226,215,230);"></div>
<div class="r" style="left:452px;top:231px;width:5px;height:3px;background:rgb(252,239,228);"></div>
<div class="r" style="left:457px;top:231px;width:5px;height:3px;background:rgb(214,219,218);"></div>
<div class="r" style="left:462px;top:231px;width:5px;height:3px;background:rgb(251,237,231);"></div>
<div class="r" style="left:467px;top:231px;width:5px;height:3px;background:rgb(244,227,219);"></div>
<div class="r" style="left:472px;top:231px;width:5px;height:3px;background:rgb(219,210,195);"></div>
<div class="r" style="left:477px;top:231px;width:5px;height:3px;background:rgb(234,221,212);"></div>
<div class="r" style="left:482px;top:231px;width:5px;height:3px;background:rgb(218,210,198);"></div>
<div class="r" style="left:487px;top:231px;width:5px;height:3px;background:rgb(248,234,227);"></div>
<div class="r" style="left:492px;top:231px;width:5px;height:3px;background:rgb(214,203,212);"></div>
<div class="r" style="left:497px;top:231px;width:5px;height:3px;background:rgb(230,238,235);"></div>
<div class="r" style="left:502px;top:231px;width:5px;height:3px;background:rgb(228,217,228);"></div>
<div class="r" style="left:507px;top:231px;width:5px;height:3px;background:rgb(222,220,226);"></div>
<div class="r" style="left:512px;top:231px;width:5px;height:3px;background:rgb(232,235,230);"></div>
<div class="r" style="left:517px;top:231px;width:5px;height:3px;background:rgb(227,237,227);"></div>
<div class="r" style="left:522px;top:231px;width:5px;height:3px;background:rgb(217,205,203);"></div>
<div class="r" style="left:527px;top:231px;width:5px;height:3px;background:rgb(224,210,205);"></div>
<div class="r" style="left:532px;top:231px;width:5px;height:3px;background:rgb(205,206,203);"></div>
<div class="r" style="left:537px;top:231px;width:5px;height:3px;background:rgb(232,224,214);"></div>
<div class="r" style="left:542px;top:231px;width:5px;height:3px;background:rgb(209,212,216);"></div>
<div class="r" style="left:547px;top:231px;width:5px;height:3px;background:rgb(252,238,229);"></div>
<div class="r" style="left:552px;top:231px;width:5px;height:3px;background:rgb(239,247,243);"></div>
<div class="r" style="left:557px;top:231px;width:5px;height:3px;background:rgb(225,233,249);"></div>
<div class="r" style="left:562px;top:231px;width:5px;height:3px;background:rgb(250,233,222);"></div>
<div class="r" style="left:567px;top:231px;width:5px;height:3px;background:rgb(241,229,217);"></div>
<div class="r" style="left:572px;top:231px;width:5px;height:3px;background:rgb(225,208,223);"></div>
<div class="r" style="left:577px;top:231px;width:5px;height:3px;background:rgb(231,222,208);"></div>
<div class="r" style="left:582px;top:231px;width:5px;height:3px;background:rgb(237,238,237);"></div>
<div class="r" style="left:587px;top:231px;width:5px;height:3px;background:rgb(234,226,222);"></div>
<div class="r" style="left:592px;top:231px;width:5px;height:3px;background:rgb(220,204,197);"></div>
<div class="r" style="left:597px;top:231px;width:5px;height:3px;background:rgb(228,212,205);"></div>
<div class="r" style="left:602px;top:231px;width:5px;height:3px;background:rgb(226,221,222);"></div>
<div class="r" style="left:607px;top:231px;width:5px;height:3px;background:rgb(238,228,244);"></div>
<div class="r" style="left:612px;top:231px;width:5px;height:3px;background:rgb(212,202,198);"></div>
<div class="r" style="left:617px;top:231px;width:5px;height:3px;background:rgb(214,208,200);"></div>
<div class="r" style="left:622px;top:231px;width:5px;height:3px;background:rgb(244,232,220);"></div>
<div class="r" style="left:627px;top:231px;width:2px;height:3px;background:rgb(204,213,231);"></div>
<div class="t" style="left:628.5px;top:220.83px;font-size:10.6px;line-height:15px;color:#111;font-weight:normal;white-space:nowrap;">eServlet</div>
<div class="t" style="left:416px;top:262.93px;font-size:10.29px;line-height:14px;color:#1f4ea6;font-weight:normal;white-space:nowrap;letter-spacing:-0.012px;">sp_certificate.cer</div>
<div class="r" style="left:741px;top:142px;width:265px;height:112px;background:#f5f5f5;border:1px solid #e2e2e2;border-left:2px solid #2c3f9c;box-sizing:border-box;"></div>
<div class="t" style="left:762.2px;top:151.63px;font-size:10.31px;line-height:14px;color:#111;font-weight:bold;white-space:nowrap;">What is SAML?</div>
<div class="t" style="left:762.2px;top:175.63px;font-size:10.3px;line-height:14px;color:#111;font-weight:normal;white-space:nowrap;letter-spacing:-0.127px;">Security Assertion Markup Language (SAML) is a</div>
<div class="t" style="left:762.2px;top:192.53px;font-size:10.3px;line-height:14px;color:#111;font-weight:normal;white-space:nowrap;letter-spacing:0.012px;">standard used for transferring the users identity</div>
<div class="t" style="left:762.2px;top:209.43px;font-size:10.3px;line-height:14px;color:#111;font-weight:normal;white-space:nowrap;letter-spacing:-0.031px;">details between the Central Server and an Identity</div>
<div class="t" style="left:762.2px;top:225.73px;font-size:10.3px;line-height:14px;color:#111;font-weight:normal;white-space:nowrap;letter-spacing:-0.195px;">Provider, such as, Okta, OneLogin, etc..</div>
<div class="t" style="left:217.3px;top:306.38px;font-size:11.3px;line-height:16px;color:#111;font-weight:normal;white-space:nowrap;letter-spacing:0.071px;">Identity Provider Details</div>
<div class="r" style="left:217px;top:323px;width:223px;height:1px;background:linear-gradient(to right,#d6d6d6,#f4f4f4);"></div>
<div class="t" style="left:233px;top:325.67px;font-size:10.18px;line-height:14px;color:#444;font-weight:normal;white-space:nowrap;letter-spacing:0.003px;">Enter the details provided by your IdP below. To learn more about SAML authentication, <span style="color:#1f4ea6">click here.</span></div>
<div class="t" style="left:233.2px;top:354.73px;font-size:10.3px;line-height:14px;color:#111;font-weight:normal;white-space:nowrap;letter-spacing:-0.178px;">Select IdP</div>
<div class="t" style="left:402px;top:354.20px;font-size:10.4px;line-height:15px;color:#111;font-weight:normal;white-space:nowrap;">:</div>
<div class="t" style="left:233.2px;top:399.03px;font-size:10.3px;line-height:14px;color:#111;font-weight:normal;white-space:nowrap;letter-spacing:-0.171px;">IdP name</div>
<div class="t" style="left:402px;top:398.50px;font-size:10.4px;line-height:15px;color:#111;font-weight:normal;white-space:nowrap;">:</div>
<div class="t" style="left:233.2px;top:443.63px;font-size:10.3px;line-height:14px;color:#111;font-weight:normal;white-space:nowrap;letter-spacing:-0.25px;">Name ID</div>
<div class="t" style="left:402px;top:443.10px;font-size:10.4px;line-height:15px;color:#111;font-weight:normal;white-space:nowrap;">:</div>
<div class="t" style="left:233.2px;top:486.23px;font-size:10.3px;line-height:14px;color:#111;font-weight:normal;white-space:nowrap;letter-spacing:0.02px;">Configuration by uploading</div>
<div class="t" style="left:402px;top:485.70px;font-size:10.4px;line-height:15px;color:#111;font-weight:normal;white-space:nowrap;">:</div>
<div class="t" style="left:233.2px;top:526.13px;font-size:10.3px;line-height:14px;color:#111;font-weight:normal;white-space:nowrap;letter-spacing:-0.114px;">Upload metadata</div>
<div class="t" style="left:402px;top:525.60px;font-size:10.4px;line-height:15px;color:#111;font-weight:normal;white-space:nowrap;">:</div>
<div class="r" style="left:416px;top:350px;width:202px;height:23px;border:1px solid #d2d2d2;border-radius:2px;box-sizing:border-box;background:#fff;"></div>
<div class="t" style="left:426px;top:355.26px;font-size:10.5px;line-height:15px;color:#111;font-weight:normal;white-space:nowrap;letter-spacing:-0.1px;">Others</div>
<svg class="r" style="left:604px;top:359px" width="8" height="5" viewBox="0 0 8 5"><path d="M0.5 0.8 L7.5 0.8 L4 4.2Z" fill="#555"/></svg>
<div class="r" style="left:416px;top:395px;width:202px;height:23px;border:1px solid #d2d2d2;border-radius:2px;box-sizing:border-box;background:#fff;"></div>
<div class="t" style="left:426px;top:400.26px;font-size:10.5px;line-height:15px;color:#111;font-weight:normal;white-space:nowrap;letter-spacing:0.013px;">AuthPoint</div>
<div class="r" style="left:416px;top:440px;width:202px;height:23px;border:1px solid #d2d2d2;border-radius:2px;box-sizing:border-box;background:#fff;"></div>
<div class="t" style="left:426px;top:445.26px;font-size:10.5px;line-height:15px;color:#111;font-weight:normal;white-space:nowrap;letter-spacing:-0.271px;">Username</div>
<svg class="r" style="left:604px;top:449px" width="8" height="5" viewBox="0 0 8 5"><path d="M0.5 0.8 L7.5 0.8 L4 4.2Z" fill="#555"/></svg>
<svg class="r" style="left:420px;top:487.3px" width="10" height="10" viewBox="0 0 10 10"><defs><linearGradient id="rg3" x1="0" y1="0" x2="0" y2="1"><stop offset="0" stop-color="#e2e2e2"/><stop offset="1" stop-color="#fafafa"/></linearGradient></defs><circle cx="5" cy="5" r="4.4" fill="url(#rg3)" stroke="#9a9a9a" stroke-width="0.9"/><circle cx="5" cy="5" r="2.1" fill="#1a1a1a"/></svg>
<div class="t" style="left:433.3px;top:486.83px;font-size:10.6px;line-height:15px;color:#111;font-weight:normal;white-space:nowrap;letter-spacing:0.029px;">Metadata</div>
<svg class="r" style="left:483.3px;top:487.3px" width="10" height="10" viewBox="0 0 10 10"><defs><linearGradient id="rg4" x1="0" y1="0" x2="0" y2="1"><stop offset="0" stop-color="#e2e2e2"/><stop offset="1" stop-color="#fafafa"/></linearGradient></defs><circle cx="5" cy="5" r="4.4" fill="url(#rg4)" stroke="#9a9a9a" stroke-width="0.9"/></svg>
<div class="t" style="left:496px;top:486.83px;font-size:10.6px;line-height:15px;color:#111;font-weight:normal;white-space:nowrap;letter-spacing:0.12px;">Certificate</div>
<div class="r" style="left:416px;top:525px;width:70px;height:17px;border:1px solid #a6a6a6;box-sizing:border-box;background:#efefef;border-radius:1px;"></div>
<div class="t" style="left:422.6px;top:525.59px;font-size:11.0px;line-height:15px;color:#111;font-weight:normal;white-space:nowrap;letter-spacing:-0.28px;">Choose File</div>
<div class="t" style="left:488.9px;top:525.59px;font-size:11.0px;line-height:15px;color:#111;font-weight:normal;white-space:nowrap;">wg-</div>
<div class="r" style="left:506px;top:527px;width:5px;height:3px;background:rgb(229,231,230);"></div>
<div class="r" style="left:511px;top:527px;width:5px;height:3px;background:rgb(225,212,223);"></div>
<div class="r" style="left:516px;top:527px;width:5px;height:3px;background:rgb(192,206,219);"></div>
<div class="r" style="left:521px;top:527px;width:5px;height:3px;background:rgb(200,213,206);"></div>
<div class="r" style="left:526px;top:527px;width:5px;height:3px;background:rgb(222,209,228);"></div>
<div class="r" style="left:531px;top:527px;width:5px;height:3px;background:rgb(206,215,223);"></div>
<div class="r" style="left:536px;top:527px;width:5px;height:3px;background:rgb(213,216,234);"></div>
<div class="r" style="left:541px;top:527px;width:5px;height:3px;background:rgb(227,213,207);"></div>
<div class="r" style="left:546px;top:527px;width:5px;height:3px;background:rgb(205,192,208);"></div>
<div class="r" style="left:551px;top:527px;width:5px;height:3px;background:rgb(248,244,232);"></div>
<div class="r" style="left:556px;top:527px;width:5px;height:3px;background:rgb(229,243,255);"></div>
<div class="r" style="left:561px;top:527px;width:5px;height:3px;background:rgb(229,240,251);"></div>
<div class="r" style="left:566px;top:527px;width:5px;height:3px;background:rgb(217,217,216);"></div>
<div class="r" style="left:571px;top:527px;width:5px;height:3px;background:rgb(225,208,225);"></div>
<div class="r" style="left:576px;top:527px;width:5px;height:3px;background:rgb(211,209,210);"></div>
<div class="r" style="left:581px;top:527px;width:5px;height:3px;background:rgb(213,221,229);"></div>
<div class="r" style="left:586px;top:527px;width:5px;height:3px;background:rgb(242,226,219);"></div>
<div class="r" style="left:591px;top:527px;width:5px;height:3px;background:rgb(222,229,230);"></div>
<div class="r" style="left:506px;top:530px;width:5px;height:5px;background:rgb(197,211,218);"></div>
<div class="r" style="left:511px;top:530px;width:5px;height:5px;background:rgb(136,148,158);"></div>
<div class="r" style="left:516px;top:530px;width:5px;height:5px;background:rgb(202,185,198);"></div>
<div class="r" style="left:521px;top:530px;width:5px;height:5px;background:rgb(166,150,167);"></div>
<div class="r" style="left:526px;top:530px;width:5px;height:5px;background:rgb(145,155,167);"></div>
<div class="r" style="left:531px;top:530px;width:5px;height:5px;background:rgb(177,186,202);"></div>
<div class="r" style="left:536px;top:530px;width:5px;height:5px;background:rgb(178,166,157);"></div>
<div class="r" style="left:541px;top:530px;width:5px;height:5px;background:rgb(169,181,171);"></div>
<div class="r" style="left:546px;top:530px;width:5px;height:5px;background:rgb(179,194,206);"></div>
<div class="r" style="left:551px;top:530px;width:5px;height:5px;background:rgb(249,247,228);"></div>
<div class="r" style="left:556px;top:530px;width:5px;height:5px;background:rgb(241,237,241);"></div>
<div class="r" style="left:561px;top:530px;width:5px;height:5px;background:rgb(246,245,243);"></div>
<div class="r" style="left:566px;top:530px;width:5px;height:5px;background:rgb(153,139,135);"></div>
<div class="r" style="left:571px;top:530px;width:5px;height:5px;background:rgb(216,201,189);"></div>
<div class="r" style="left:576px;top:530px;width:5px;height:5px;background:rgb(164,154,139);"></div>
<div class="r" style="left:581px;top:530px;width:5px;height:5px;background:rgb(175,183,198);"></div>
<div class="r" style="left:586px;top:530px;width:5px;height:5px;background:rgb(171,168,173);"></div>
<div class="r" style="left:591px;top:530px;width:5px;height:5px;background:rgb(203,192,182);"></div>
<div class="r" style="left:506px;top:535px;width:5px;height:3px;background:rgb(203,198,191);"></div>
<div class="r" style="left:511px;top:535px;width:5px;height:3px;background:rgb(227,222,227);"></div>
<div class="r" style="left:516px;top:535px;width:5px;height:3px;background:rgb(229,245,232);"></div>
<div class="r" style="left:521px;top:535px;width:5px;height:3px;background:rgb(246,232,226);"></div>
<div class="r" style="left:526px;top:535px;width:5px;height:3px;background:rgb(223,217,199);"></div>
<div class="r" style="left:531px;top:535px;width:5px;height:3px;background:rgb(225,218,206);"></div>
<div class="r" style="left:536px;top:535px;width:5px;height:3px;background:rgb(185,198,210);"></div>
<div class="r" style="left:541px;top:535px;width:5px;height:3px;background:rgb(210,206,210);"></div>
<div class="r" style="left:546px;top:535px;width:5px;height:3px;background:rgb(204,203,205);"></div>
<div class="r" style="left:551px;top:535px;width:5px;height:3px;background:rgb(244,232,232);"></div>
<div class="r" style="left:556px;top:535px;width:5px;height:3px;background:rgb(251,238,230);"></div>
<div class="r" style="left:561px;top:535px;width:5px;height:3px;background:rgb(249,236,226);"></div>
<div class="r" style="left:566px;top:535px;width:5px;height:3px;background:rgb(233,221,218);"></div>
<div class="r" style="left:571px;top:535px;width:5px;height:3px;background:rgb(234,220,210);"></div>
<div class="r" style="left:576px;top:535px;width:5px;height:3px;background:rgb(211,227,234);"></div>
<div class="r" style="left:581px;top:535px;width:5px;height:3px;background:rgb(232,243,240);"></div>
<div class="r" style="left:586px;top:535px;width:5px;height:3px;background:rgb(245,228,221);"></div>
<div class="r" style="left:591px;top:535px;width:5px;height:3px;background:rgb(207,189,205);"></div>
<div class="t" style="left:596px;top:525.59px;font-size:11.0px;line-height:15px;color:#111;font-weight:normal;white-space:nowrap;">.xml</div>
<div class="t" style="left:416.3px;top:542.17px;font-size:10.19px;line-height:14px;color:#333;font-weight:normal;white-space:nowrap;letter-spacing:0.002px;">Only .xml files are supported for the metadata</div>
<div class="r" style="left:556px;top:565px;width:48px;height:23px;background:#3c7dc6;border:1px solid #2f6db3;box-sizing:border-box;"></div>
<div class="t" style="left:569.3px;top:569.70px;font-size:10.4px;line-height:15px;color:#fff;font-weight:bold;white-space:nowrap;letter-spacing:-0.833px;">Save</div>
<div class="r" style="left:610px;top:565px;width:48px;height:23px;background:#f2f2f2;"></div>
<div class="t" style="left:618.6px;top:569.70px;font-size:10.4px;line-height:15px;color:#111;font-weight:normal;white-space:nowrap;letter-spacing:-0.32px;">Cancel</div>
<div class="r" style="left:0px;top:0px;width:1028px;height:644px;border:1px solid #a8a8a8;box-sizing:border-box;background:transparent;"></div>

</body></html>
